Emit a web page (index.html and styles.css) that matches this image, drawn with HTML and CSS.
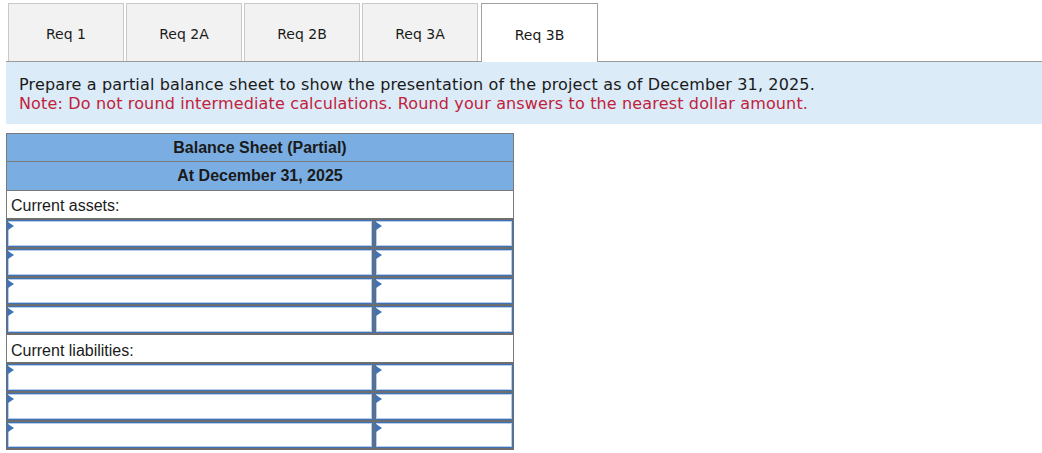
FILE: index.html
```html
<!DOCTYPE html>
<html>
<head>
<meta charset="utf-8">
<link rel="stylesheet" href="styles.css">
</head>
<body>
<div class="page">
  <div class="tabs">
    <div class="tab">Req 1</div>
    <div class="tab">Req 2A</div>
    <div class="tab">Req 2B</div>
    <div class="tab">Req 3A</div>
    <div class="tab active">Req 3B</div>
  </div>
  <div class="prompt">
    <p class="instr">Prepare a partial balance sheet to show the presentation of the project as of December 31, 2025.</p>
    <p class="note">Note: Do not round intermediate calculations. Round your answers to the nearest dollar amount.</p>
  </div>
  <table class="sheet">
    <colgroup><col class="c1"><col class="c2"></colgroup>
    <tr><th colspan="2">Balance Sheet (Partial)</th></tr>
    <tr><th colspan="2">At December 31, 2025</th></tr>
    <tr><td colspan="2" class="label">Current assets:</td></tr>
    <tr><td class="in"><div class="box"></div></td><td class="in"><div class="box"></div></td></tr>
    <tr><td class="in"><div class="box"></div></td><td class="in"><div class="box"></div></td></tr>
    <tr><td class="in"><div class="box"></div></td><td class="in"><div class="box"></div></td></tr>
    <tr><td class="in"><div class="box"></div></td><td class="in"><div class="box"></div></td></tr>
    <tr><td colspan="2" class="label">Current liabilities:</td></tr>
    <tr><td class="in"><div class="box"></div></td><td class="in"><div class="box"></div></td></tr>
    <tr><td class="in"><div class="box"></div></td><td class="in"><div class="box"></div></td></tr>
    <tr><td class="in"><div class="box"></div></td><td class="in"><div class="box"></div></td></tr>
  </table>
</div>
</body>
</html>
```

FILE: styles.css
```css
html, body {
  margin: 0;
  padding: 0;
  background: #ffffff;
}

.page {
  padding: 3px 0 0 6px;
}

.tabs {
  display: flex;
  gap: 2px;
  padding-left: 2px;
  border-bottom: 1px solid #9b9b9b;
  height: 58px;
}

.tab {
  width: 116px;
  height: 58px;
  box-sizing: border-box;
  background: #f2f2f2;
  border: 1px solid #c9c9c9;
  border-bottom: none;
  font-family: "DejaVu Sans", Verdana, sans-serif;
  font-size: 14px;
  color: #1a1a1a;
  display: flex;
  align-items: center;
  justify-content: center;
  padding-top: 3px;
}

.tab.active {
  background: #ffffff;
  border-color: #a0a0a0;
  height: 59px;
  width: 117px;
  margin-left: 1px;
}

.prompt {
  background: #dbebf8;
  padding: 13px 13px 11px;
  font-family: "DejaVu Sans", Verdana, sans-serif;
  font-size: 16px;
  letter-spacing: 0.15px;
  line-height: 19px;
}

.prompt p {
  margin: 0;
}

.instr {
  color: #1a1a1a;
}

.note {
  color: #c1213b;
}

.sheet {
  margin-top: 9px;
  border-collapse: collapse;
  width: 508px;
  font-family: "Liberation Sans", Arial, sans-serif;
  font-size: 16px;
  color: #1a1a1a;
}

.c1 { width: 368px; }
.c2 { width: 140px; }

.sheet th {
  background: #7aaee3;
  border: 1px solid #7a7a7a;
  height: 27.4px;
  padding: 0;
  font-weight: bold;
  text-align: center;
}

.sheet td {
  border: 1px solid #7a7a7a;
  padding: 0;
}

.sheet td.label {
  height: 23.4px;
  padding: 4px 0 0 4px;
  background: #ffffff;
}

.sheet td.in {
  border: 2px solid #6e6e6e;
}

.sheet td.in:first-child {
  border-left-width: 1px;
}

.sheet td.in:last-child {
  border-right-width: 1px;
}

.box {
  position: relative;
  box-sizing: border-box;
  height: 26.7px;
  border: 1px solid #3e73b8;
  box-shadow: inset 0 0 0 1px #b9cde8;
  background: #ffffff;
}

.box::before {
  content: "";
  position: absolute;
  left: 0;
  top: 1px;
  border-top: 4px solid transparent;
  border-bottom: 4px solid transparent;
  border-left: 6px solid #3e73b8;
}
```
